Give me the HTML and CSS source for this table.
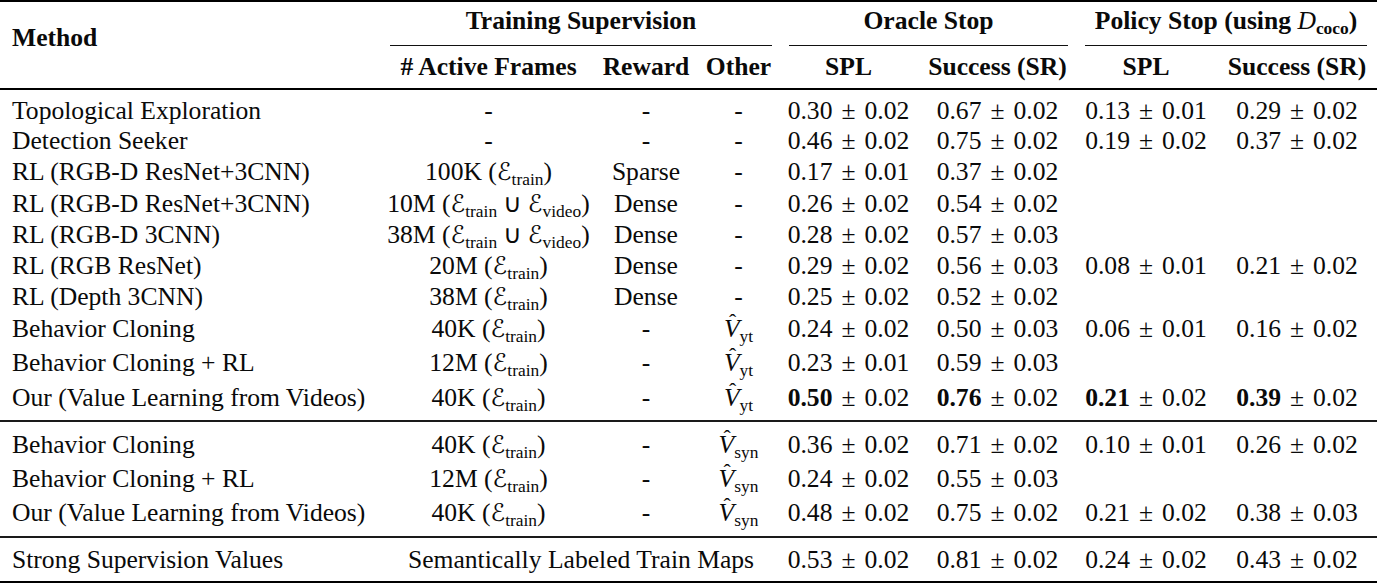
FILE: index.html
```html
<!DOCTYPE html>
<html lang="en">
<head>
<meta charset="utf-8">
<title>Results table</title>
<link rel="stylesheet" href="styles.css">
</head>
<body>
<table class="results">
  <colgroup>
    <col class="c-method"><col class="c-frames"><col class="c-reward"><col class="c-other">
    <col class="c-spl1"><col class="c-sr1"><col class="c-spl2"><col class="c-sr2">
  </colgroup>
  <thead>
    <tr class="hrow1">
      <th rowspan="2" class="method mhead">Method</th>
      <th colspan="3" class="group"><div class="cmid cmid-train">Training Supervision</div></th>
      <th colspan="2" class="group"><div class="cmid cmid-oracle">Oracle Stop</div></th>
      <th colspan="2" class="group"><div class="cmid cmid-policy">Policy Stop (using <i class="mi">D</i><sub class="bsub">coco</sub>)</div></th>
    </tr>
    <tr class="hrow2">
      <th># Active Frames</th>
      <th>Reward</th>
      <th>Other</th>
      <th>SPL</th>
      <th>Success (SR)</th>
      <th>SPL</th>
      <th>Success (SR)</th>
    </tr>
  </thead>
  <tbody>
    <tr class="h30 first">
      <td class="method">Topological Exploration</td><td>-</td><td>-</td><td>-</td>
      <td>0.30<span class="pm">±</span>0.02</td><td>0.67<span class="pm">±</span>0.02</td><td>0.13<span class="pm">±</span>0.01</td><td>0.29<span class="pm">±</span>0.02</td>
    </tr>
    <tr class="h30">
      <td class="method">Detection Seeker</td><td>-</td><td>-</td><td>-</td>
      <td>0.46<span class="pm">±</span>0.02</td><td>0.75<span class="pm">±</span>0.02</td><td>0.19<span class="pm">±</span>0.02</td><td>0.37<span class="pm">±</span>0.02</td>
    </tr>
    <tr class="h32">
      <td class="method">RL (RGB-D ResNet+3CNN)</td><td>100K (<span class="cal">ℰ</span><sub>train</sub>)</td><td>Sparse</td><td>-</td>
      <td>0.17<span class="pm">±</span>0.01</td><td>0.37<span class="pm">±</span>0.02</td><td></td><td></td>
    </tr>
    <tr class="h31">
      <td class="method">RL (RGB-D ResNet+3CNN)</td><td>10M (<span class="cal">ℰ</span><sub>train</sub><span class="cup">∪</span><span class="cal">ℰ</span><sub>video</sub>)</td><td>Dense</td><td>-</td>
      <td>0.26<span class="pm">±</span>0.02</td><td>0.54<span class="pm">±</span>0.02</td><td></td><td></td>
    </tr>
    <tr class="h31">
      <td class="method">RL (RGB-D 3CNN)</td><td>38M (<span class="cal">ℰ</span><sub>train</sub><span class="cup">∪</span><span class="cal">ℰ</span><sub>video</sub>)</td><td>Dense</td><td>-</td>
      <td>0.28<span class="pm">±</span>0.02</td><td>0.57<span class="pm">±</span>0.03</td><td></td><td></td>
    </tr>
    <tr class="h31">
      <td class="method">RL (RGB ResNet)</td><td>20M (<span class="cal">ℰ</span><sub>train</sub>)</td><td>Dense</td><td>-</td>
      <td>0.29<span class="pm">±</span>0.02</td><td>0.56<span class="pm">±</span>0.03</td><td>0.08<span class="pm">±</span>0.01</td><td>0.21<span class="pm">±</span>0.02</td>
    </tr>
    <tr class="h31">
      <td class="method">RL (Depth 3CNN)</td><td>38M (<span class="cal">ℰ</span><sub>train</sub>)</td><td>Dense</td><td>-</td>
      <td>0.25<span class="pm">±</span>0.02</td><td>0.52<span class="pm">±</span>0.02</td><td></td><td></td>
    </tr>
    <tr class="h34">
      <td class="method">Behavior Cloning</td><td>40K (<span class="cal">ℰ</span><sub>train</sub>)</td><td>-</td><td><span class="vhat">V</span><sub>yt</sub></td>
      <td>0.24<span class="pm">±</span>0.02</td><td>0.50<span class="pm">±</span>0.03</td><td>0.06<span class="pm">±</span>0.01</td><td>0.16<span class="pm">±</span>0.02</td>
    </tr>
    <tr class="h34">
      <td class="method">Behavior Cloning + RL</td><td>12M (<span class="cal">ℰ</span><sub>train</sub>)</td><td>-</td><td><span class="vhat">V</span><sub>yt</sub></td>
      <td>0.23<span class="pm">±</span>0.01</td><td>0.59<span class="pm">±</span>0.03</td><td></td><td></td>
    </tr>
    <tr class="h36 last">
      <td class="method">Our (Value Learning from Videos)</td><td>40K (<span class="cal">ℰ</span><sub>train</sub>)</td><td>-</td><td><span class="vhat">V</span><sub>yt</sub></td>
      <td><b>0.50</b><span class="pm">±</span>0.02</td><td><b>0.76</b><span class="pm">±</span>0.02</td><td><b>0.21</b><span class="pm">±</span>0.02</td><td><b>0.39</b><span class="pm">±</span>0.02</td>
    </tr>
  </tbody>
  <tbody>
    <tr class="h34 first">
      <td class="method">Behavior Cloning</td><td>40K (<span class="cal">ℰ</span><sub>train</sub>)</td><td>-</td><td><span class="vhat">V</span><sub>syn</sub></td>
      <td>0.36<span class="pm">±</span>0.02</td><td>0.71<span class="pm">±</span>0.02</td><td>0.10<span class="pm">±</span>0.01</td><td>0.26<span class="pm">±</span>0.02</td>
    </tr>
    <tr class="h34">
      <td class="method">Behavior Cloning + RL</td><td>12M (<span class="cal">ℰ</span><sub>train</sub>)</td><td>-</td><td><span class="vhat">V</span><sub>syn</sub></td>
      <td>0.24<span class="pm">±</span>0.02</td><td>0.55<span class="pm">±</span>0.03</td><td></td><td></td>
    </tr>
    <tr class="h34 last">
      <td class="method">Our (Value Learning from Videos)</td><td>40K (<span class="cal">ℰ</span><sub>train</sub>)</td><td>-</td><td><span class="vhat">V</span><sub>syn</sub></td>
      <td>0.48<span class="pm">±</span>0.02</td><td>0.75<span class="pm">±</span>0.02</td><td>0.21<span class="pm">±</span>0.02</td><td>0.38<span class="pm">±</span>0.03</td>
    </tr>
  </tbody>
  <tbody>
    <tr class="h31 first last">
      <td class="method">Strong Supervision Values</td><td colspan="3">Semantically Labeled Train Maps</td>
      <td>0.53<span class="pm">±</span>0.02</td><td>0.81<span class="pm">±</span>0.02</td><td>0.24<span class="pm">±</span>0.02</td><td>0.43<span class="pm">±</span>0.02</td>
    </tr>
  </tbody>
</table>
</body>
</html>
```
FILE: styles.css
```css
html, body {
  margin: 0;
  padding: 0;
  background: #ffffff;
}

body {
  font-family: "Liberation Serif", "Times New Roman", "DejaVu Serif", serif;
  font-size: 25.6px;
  color: #0a0a0a;
}

.results {
  width: 1377px;
  table-layout: fixed;
  border-collapse: collapse;
  border-top: 2px solid #000;
  border-bottom: 2px solid #000;
  font-family: "Liberation Serif", "Times New Roman", serif;
}

.c-method { width: 385px; }
.c-frames { width: 207px; }
.c-reward { width: 108px; }
.c-other  { width: 77px; }
.c-spl1   { width: 143px; }
.c-sr1    { width: 155px; }
.c-spl2   { width: 142px; }
.c-sr2    { width: 160px; }

th, td {
  padding: 0;
  text-align: center;
  white-space: nowrap;
  vertical-align: middle;
  line-height: 30px;
  font-weight: normal;
}

th {
  font-weight: bold;
}

.method {
  text-align: left;
  padding-left: 12px;
}

.mhead {
  padding-bottom: 14px;
}

/* header row 1 with cmidrules */
.hrow1 .group {
  vertical-align: top;
  padding-top: 4px;
}

.cmid {
  padding-bottom: 9px;
  border-bottom: 1px solid #111;
}

.cmid-train  { margin: 0 5px 0 5px; }
.cmid-oracle { margin: 0 7px 0 12px; }
.cmid-policy { margin: 0 10px 0 10px; }

.hrow2 th {
  padding: 6px 0;
}

thead {
  border-bottom: 2px solid #000;
}

tbody + tbody {
  border-top: 2px solid #1a1a1a;
}

.h30 td { height: 30px; }
.h31 td { height: 31px; }
.h32 td { height: 32px; }
.h34 td { height: 34px; }
.h36 td { height: 36px; }

.first td { padding-top: 6px; }
.last td { padding-bottom: 6px; }

.h36.last td { padding-bottom: 4px; }

.pm {
  margin: 0 9px;
}

sub {
  font-size: 0.68em;
  line-height: 0;
  vertical-align: -0.3em;
}

.bsub {
  font-weight: bold;
}

.mi {
  font-style: italic;
  font-weight: normal;
}

.cal {
  font-family: "DejaVu Sans", serif;
  font-style: normal;
  font-size: 0.95em;
}

.cup {
  font-family: "DejaVu Sans", serif;
  margin: 0 6px;
  font-size: 1em;
}

.vhat {
  position: relative;
  font-style: italic;
  display: inline-block;
}

.vhat::after {
  content: "\02C6";
  position: absolute;
  left: 5px;
  top: -7px;
  font-style: normal;
  font-size: 0.85em;
}
```
